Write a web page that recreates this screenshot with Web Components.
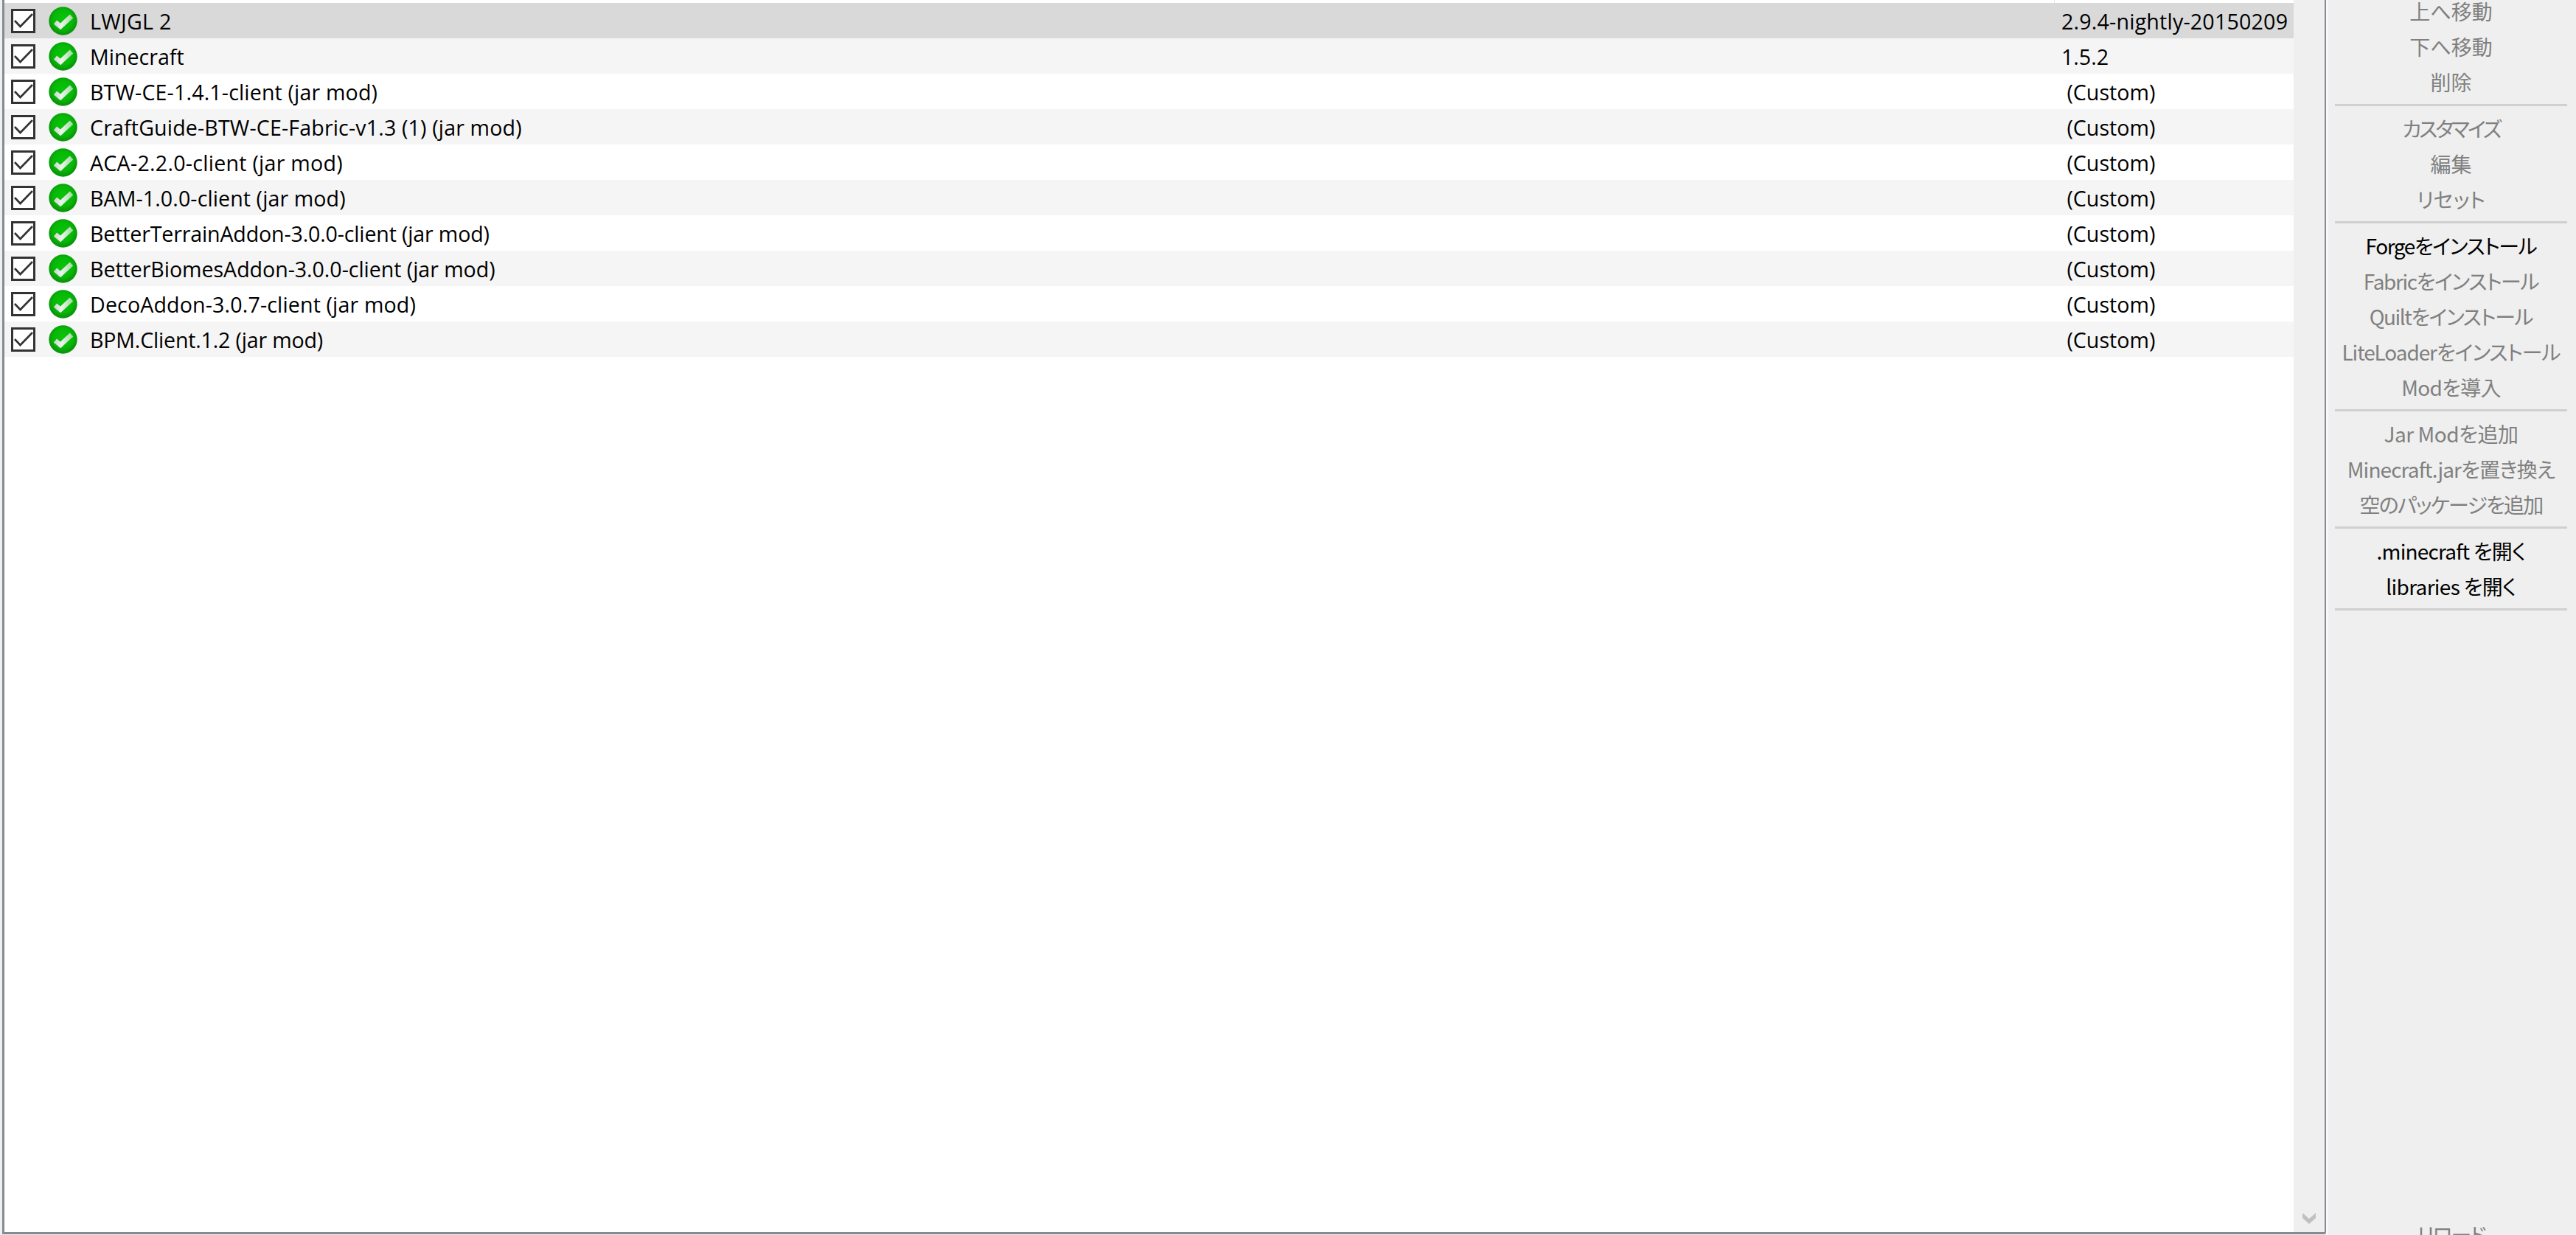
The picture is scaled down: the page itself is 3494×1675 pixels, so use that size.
<!DOCTYPE html>
<html>
<head>
<meta charset="utf-8">
<title>Mod list</title>
<style>
  html, body { margin: 0; height: 100%; overflow: hidden; background: #efefef; }
</style>
</head>
<body>
<mod-page></mod-page>

<template id="row-tpl">
  <style>
    :host { display: flex; align-items: center; height: 48px; background: #fff; font: 28.6px "Open Sans", "Liberation Sans", sans-serif; color: #000; white-space: nowrap; }
    /* first child of the list is the 4px header strip */
    :host(:nth-child(odd)) { background: #f5f5f5; }
    :host([selected]) { background: #d9d9d9; }
    .check { flex: none; width: 33px; height: 33px; margin-left: 9px; }
    .ok { flex: none; width: 39px; height: 39px; margin-left: 18px; }
    .name { flex: none; width: 2674px; margin-left: 17px; }
    .version { flex: none; }
    svg { display: block; }
  </style>
  <svg class="check" viewBox="0 0 33 33">
    <rect x="1.5" y="1.5" width="30" height="30" fill="#fff" stroke="#333" stroke-width="3"/>
    <path d="M5 16 L12.5 24 L29 7" fill="none" stroke="#333" stroke-width="2.6"/>
  </svg>
  <svg class="ok" viewBox="0 0 39 39">
    <defs>
      <radialGradient id="g" cx="50%" cy="45%" r="50%">
        <stop offset="0" stop-color="#0ac40a"/>
        <stop offset="0.7" stop-color="#07b807"/>
        <stop offset="1" stop-color="#0a960a"/>
      </radialGradient>
      <linearGradient id="t" x1="0" y1="0" x2="1" y2="0">
        <stop offset="0" stop-color="#d4d8d4"/>
        <stop offset="0.4" stop-color="#eef4ee"/>
        <stop offset="1" stop-color="#a8dca8"/>
      </linearGradient>
    </defs>
    <circle cx="19.5" cy="19.5" r="19.2" fill="url(#g)"/>
    <path d="M9 21 L16 27 L31 13" fill="none" stroke="url(#t)" stroke-width="6.5"/>
  </svg>
  <span class="name"><slot name="name"></slot></span>
  <span class="version"><slot name="version"></slot></span>
</template>

<template id="btn-tpl">
  <style>
    :host { display: block; height: 48px; text-align: center; font: 400 28px/45px "Noto Sans CJK JP", sans-serif; font-feature-settings: "palt"; color: #808080; white-space: nowrap; }
    :host([on]) { color: #000; }
  </style>
  <slot></slot>
</template>

<template id="page-tpl">
  <style>
    :host { display: flex; height: 1675px; width: 3494px; overflow: hidden; }
    .box { flex: none; box-sizing: border-box; width: 3152px; height: 1674px; margin-left: 3px; border: solid #868a92; border-width: 0 2px 3px 3px; border-bottom-right-radius: 3px; background: #fff; display: flex; }
    .list { flex: none; width: 3105px; }
    .head { height: 4px; }
    .head i { display: block; box-sizing: border-box; width: 2781px; height: 4px; border-right: 1px solid #e5e5e5; }
    .bar { flex: 1; background: #efefef; display: flex; align-items: flex-end; justify-content: center; padding-bottom: 11px; }
    .strip { flex: none; width: 3px; background: #f8f8f8; }
    .side { flex: none; box-sizing: border-box; width: 336px; padding: 0 12px 0 9px; margin-top: -7px; display: flex; flex-direction: column; height: 1707px; }
    .sep { flex: none; height: 3px; background: #d0d0d0; margin: 4px 0 8px; }
    .bottom { margin-top: auto; }
  </style>
  <div class="box">
    <div class="list" id="list"><div class="head"><i></i></div></div>
    <div class="bar">
      <svg width="18" height="15" viewBox="0 0 18 15"><path d="M0 0 L9 8 L18 0 V7 L9 15 L0 7 Z" fill="#c0c0c0"/></svg>
    </div>
  </div>
  <div class="strip"></div>
  <div class="side" id="side"></div>
</template>

<script>
  function useTemplate(el, id) {
    el.attachShadow({ mode: "open" }).appendChild(document.getElementById(id).content.cloneNode(true));
  }

  class ModRow extends HTMLElement {
    constructor() { super(); useTemplate(this, "row-tpl"); }
  }
  class SideBtn extends HTMLElement {
    constructor() { super(); useTemplate(this, "btn-tpl"); }
  }

  // [name, version, name letter spacing in px]
  const MODS = [
    ["LWJGL 2", "2.9.4-nightly-20150209", 0.3],
    ["Minecraft", "1.5.2", 0],
    ["BTW-CE-1.4.1-client (jar mod)", "\u00a0(Custom)", 0.15],
    ["CraftGuide-BTW-CE-Fabric-v1.3 (1) (jar mod)", "\u00a0(Custom)", 0.15],
    ["ACA-2.2.0-client (jar mod)", "\u00a0(Custom)", 0.26],
    ["BAM-1.0.0-client (jar mod)", "\u00a0(Custom)", 0.09],
    ["BetterTerrainAddon-3.0.0-client (jar mod)", "\u00a0(Custom)", -0.16],
    ["BetterBiomesAddon-3.0.0-client (jar mod)", "\u00a0(Custom)", -0.05],
    ["DecoAddon-3.0.7-client (jar mod)", "\u00a0(Custom)", 0.14],
    ["BPM.Client.1.2 (jar mod)", "\u00a0(Custom)", -0.19]
  ];

  // null = separator; [text, enabled, letter spacing in px]
  const SIDE = [
    ["上へ移動"], ["下へ移動"], ["削除"], null,
    ["カスタマイズ", false, -3], ["編集"], ["リセット"], null,
    ["Forgeをインストール", true, -1.4], ["Fabricをインストール", false, -1.4], ["Quiltをインストール", false, -1.5],
    ["LiteLoaderをインストール", false, -1.1], ["Modを導入", false, -0.7], null,
    ["Jar Modを追加", false, -0.5], ["Minecraft.jarを置き換え", false, -0.9], ["空のパッケージを追加", false, -1.8], null,
    [".minecraft を開く", true, -0.8], ["libraries を開く", true, -0.7], null,
    ["リロード", false, -2, "bottom"]
  ];

  class ModPage extends HTMLElement {
    constructor() {
      super();
      useTemplate(this, "page-tpl");
    }
    connectedCallback() {
      const list = this.shadowRoot.getElementById("list");
      MODS.forEach(([name, version, spacing], i) => {
        const row = document.createElement("mod-row");
        if (i === 0) row.setAttribute("selected", "");
        const a = document.createElement("span");
        a.slot = "name";
        a.style.letterSpacing = spacing + "px";
        a.textContent = name;
        const b = document.createElement("span");
        b.slot = "version";
        if (i === 0) b.style.letterSpacing = "0.2px";
        b.textContent = version;
        row.append(a, b);
        list.appendChild(row);
      });

      const side = this.shadowRoot.getElementById("side");
      SIDE.forEach(item => {
        if (!item) {
          const sep = document.createElement("div");
          sep.className = "sep";
          side.appendChild(sep);
          return;
        }
        const btn = document.createElement("side-btn");
        if (item[1]) btn.setAttribute("on", "");
        if (item[2]) btn.style.letterSpacing = item[2] + "px";
        if (item[3]) btn.className = item[3];
        btn.textContent = item[0];
        side.appendChild(btn);
      });
    }
  }

  customElements.define("mod-row", ModRow);
  customElements.define("side-btn", SideBtn);
  customElements.define("mod-page", ModPage);
</script>
</body>
</html>
